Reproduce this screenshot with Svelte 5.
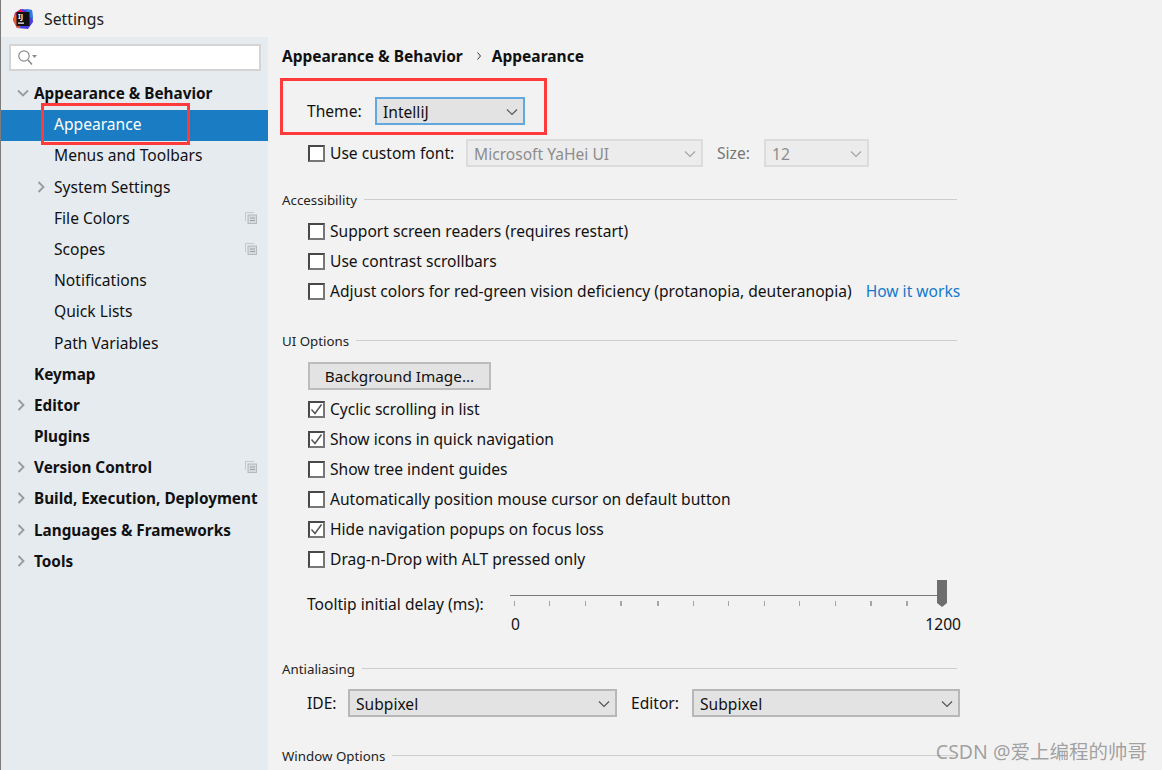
<script lang="ts">
	type TreeRow = { label: string; indent: number; bold?: boolean; arrow?: 'open' | 'closed'; selected?: boolean; copy?: boolean };

	const tree: TreeRow[] = [
		{ label: 'Appearance & Behavior', indent: 33, bold: true, arrow: 'open' },
		{ label: 'Appearance', indent: 53, selected: true },
		{ label: 'Menus and Toolbars', indent: 53 },
		{ label: 'System Settings', indent: 53, arrow: 'closed' },
		{ label: 'File Colors', indent: 53, copy: true },
		{ label: 'Scopes', indent: 53, copy: true },
		{ label: 'Notifications', indent: 53 },
		{ label: 'Quick Lists', indent: 53 },
		{ label: 'Path Variables', indent: 53 },
		{ label: 'Keymap', indent: 33, bold: true },
		{ label: 'Editor', indent: 33, bold: true, arrow: 'closed' },
		{ label: 'Plugins', indent: 33, bold: true },
		{ label: 'Version Control', indent: 33, bold: true, arrow: 'closed', copy: true },
		{ label: 'Build, Execution, Deployment', indent: 33, bold: true, arrow: 'closed' },
		{ label: 'Languages & Frameworks', indent: 33, bold: true, arrow: 'closed' },
		{ label: 'Tools', indent: 33, bold: true, arrow: 'closed' },
	];

	const accessibility = [
		{ label: 'Support screen readers (requires restart)', checked: false },
		{ label: 'Use contrast scrollbars', checked: false },
		{ label: 'Adjust colors for red-green vision deficiency (protanopia, deuteranopia)', checked: false, link: 'How it works' },
	];

	const uiOptions = [
		{ label: 'Cyclic scrolling in list', checked: true },
		{ label: 'Show icons in quick navigation', checked: true },
		{ label: 'Show tree indent guides', checked: false },
		{ label: 'Automatically position mouse cursor on default button', checked: false },
		{ label: 'Hide navigation popups on focus loss', checked: true },
		{ label: 'Drag-n-Drop with ALT pressed only', checked: false },
	];

	const ticks = Array.from({ length: 13 }, (_, i) => i);
</script>

{#snippet chevron()}
	<svg class="chev" width="12" height="8" viewBox="0 0 12 8"><path d="M1 1.5 6 6.5 11 1.5" fill="none" stroke="currentColor" stroke-width="1.2" /></svg>
{/snippet}

{#snippet check(checked: boolean)}
	<span class="box">
		{#if checked}
			<svg width="15" height="15" viewBox="0 0 15 15"><path d="M2.5 7.5 6 11.5 12.5 2.5" fill="none" stroke="#555" stroke-width="1.5" /></svg>
		{/if}
	</span>
{/snippet}

<div class="window">
	<header class="titlebar">
		<svg class="logo" width="22" height="22" viewBox="0 0 22 22">
			<path d="M3 5 9 1 20 2 21 14 16 21 5 20 1 12Z" fill="#4a3ee0" />
			<path d="M1 12 3 5 9 2 8 20 5 20Z" fill="#f0592a" />
			<path d="M3 5 9 1 12 5 5 9Z" fill="#e8175d" />
			<path d="M14 1 20 2 21 11 16 8Z" fill="#2a7fe0" />
			<rect x="4.5" y="4" width="13" height="14" fill="#111" />
			<text x="6" y="11" class="logo-text">IJ</text>
			<rect x="6" y="14.5" width="6" height="1.2" fill="#fff" />
		</svg>
		<span>Settings</span>
	</header>

	<div class="body">
		<aside class="sidebar">
			<div class="search">
				<svg width="22" height="18" viewBox="0 0 22 18">
					<circle cx="7" cy="7" r="5.2" fill="none" stroke="#8a8a8a" stroke-width="1.2" />
					<path d="M11 11 15 15.5" stroke="#8a8a8a" stroke-width="1.5" />
					<path d="M15 6h5l-2.5 3Z" fill="#8a8a8a" />
				</svg>
			</div>
			<nav class="tree">
				{#each tree as row}
					<div class="row" class:selected={row.selected} class:bold={row.bold} style="padding-left: {row.indent}px">
						{#if row.arrow === 'open'}
							<svg class="arrow" style="left: {row.indent - 17}px" width="12" height="12" viewBox="0 0 12 12"><path d="M1 3.5 6 8.5 11 3.5" fill="none" stroke="#9a9a9a" stroke-width="1.8" /></svg>
						{:else if row.arrow === 'closed'}
							<svg class="arrow" style="left: {row.indent - 19}px" width="12" height="12" viewBox="0 0 12 12"><path d="M3.5 1 8.5 6 3.5 11" fill="none" stroke="#9a9a9a" stroke-width="1.8" /></svg>
						{/if}
						<span>{row.label}</span>
						{#if row.copy}
							<svg class="copy" width="12" height="12" viewBox="0 0 12 12">
								<path d="M.5 9V.5H9" fill="none" stroke="#c3c8cc" />
								<rect x="3" y="3" width="8.5" height="8.5" fill="#d5dadd" stroke="#b4b9bd" />
								<path d="M5 6h5M5 8.5h5" stroke="#9ea3a7" />
							</svg>
						{/if}
					</div>
				{/each}
			</nav>
		</aside>

		<main class="content">
			<div class="crumbs">
				<b>Appearance &amp; Behavior</b>
				<svg class="crumb-sep" width="4" height="8" viewBox="0 0 4 8"><path d="M.5 .5 3.5 4 .5 7.5" fill="none" stroke="#333" stroke-width="1" /></svg>
				<b>Appearance</b>
			</div>

			<div class="theme-row">
				<span class="theme-label">Theme:</span>
				<div class="combo focused">IntelliJ {@render chevron()}</div>
			</div>

			<div class="font-row">
				<label class="check font-check">{@render check(false)}<span>Use custom font:</span></label>
				<div class="combo disabled font-combo">Microsoft YaHei UI {@render chevron()}</div>
				<span class="size-label">Size:</span>
				<div class="combo disabled size-combo">12 {@render chevron()}</div>
			</div>

			<h3 class="group first"><span>Accessibility</span></h3>
			<div class="checks">
				{#each accessibility as item}
					<div class="check">
						{@render check(item.checked)}<span>{item.label}</span>
						{#if item.link}<a href="#how">{item.link}</a>{/if}
					</div>
				{/each}
			</div>

			<h3 class="group ui"><span>UI Options</span></h3>
			<button class="bg-button">Background Image...</button>
			<div class="checks ui-checks">
				{#each uiOptions as item}
					<div class="check">{@render check(item.checked)}<span>{item.label}</span></div>
				{/each}
			</div>

			<div class="slider-row">
				<span class="slider-label">Tooltip initial delay (ms):</span>
				<div class="slider">
					<div class="track"></div>
					<div class="ticks">
						{#each ticks as t}<span class="tick" class:wide={t === 3 || t === 4 || t === 10 || t === 11}></span>{/each}
					</div>
					<svg class="thumb" width="10" height="27" viewBox="0 0 10 27"><path d="M0 0H10V23L5 27 0 23Z" fill="#6e6e6e" /></svg>
					<div class="slider-values"><span>0</span><span>1200</span></div>
				</div>
			</div>

			<h3 class="group aa"><span>Antialiasing</span></h3>
			<div class="aa-row">
				<span class="aa-ide">IDE:</span>
				<div class="combo aa-combo ide">Subpixel {@render chevron()}</div>
				<span class="aa-editor">Editor:</span>
				<div class="combo aa-combo editor">Subpixel {@render chevron()}</div>
			</div>

			<h3 class="group win"><span>Window Options</span></h3>
		</main>
	</div>

	<div class="mark mark-nav"></div>
	<div class="mark mark-theme"></div>
	<div class="watermark">CSDN @爱上编程的帅哥</div>
</div>

<style>
	:global(body) {
		margin: 0;
		background: #f2f2f2;
	}

	.window {
		position: relative;
		width: 1162px;
		height: 770px;
		overflow: hidden;
		background: #f2f2f2;
		color: #111;
		font-family: 'Noto Sans', 'Noto Sans CJK SC', sans-serif;
		font-size: 15.6px;
		border-left: 1px solid #7c7c7c;
		box-sizing: border-box;
	}

	.titlebar {
		height: 37px;
		display: flex;
		align-items: center;
		gap: 10px;
		padding-left: 11px;
		box-sizing: border-box;
		font-size: 15.8px;
		color: #222;
	}

	.logo-text {
		font-size: 7px;
		font-weight: 700;
		fill: #fff;
	}

	.body {
		display: flex;
		height: 733px;
	}

	.sidebar {
		width: 267px;
		flex: none;
		background: #e6ebf0;
		padding-top: 7px;
		box-sizing: border-box;
	}

	.search {
		margin-left: 8px;
		width: 252px;
		height: 27px;
		box-sizing: border-box;
		background: #fff;
		border: 2px solid #d4d4d4;
		display: flex;
		align-items: center;
		padding-left: 6px;
	}

	.tree {
		margin-top: 8px;
	}

	.row {
		position: relative;
		height: 31.2px;
		line-height: 29.5px;
		white-space: nowrap;
	}

	.row.bold {
		font-weight: 700;
		font-size: 15.3px;
	}

	.row.selected {
		background: #1a7dc4;
		color: #fff;
	}

	.arrow {
		position: absolute;
		top: 8px;
	}

	.copy {
		position: absolute;
		left: 244px;
		top: 8px;
	}

	.content {
		flex: 1;
		padding-left: 14px;
		min-width: 0;
	}

	.crumbs {
		height: 38px;
		display: flex;
		align-items: center;
		font-weight: 700;
		font-size: 15.5px;
	}

	.crumbs b {
		font-weight: 700;
		white-space: nowrap;
	}

	.crumb-sep {
		margin: 0 11px 0 14px;
		flex: none;
	}

	.theme-row {
		display: flex;
		align-items: center;
		margin: 22px 0 0 25px;
		height: 28px;
	}

	.theme-label {
		width: 68px;
		flex: none;
	}

	.combo {
		display: flex;
		align-items: center;
		justify-content: space-between;
		box-sizing: border-box;
		height: 28px;
		background: #e3e3e3;
		border: 2px solid #b8b8b8;
		padding: 1px 5px 0 6px;
		color: #111;
		flex: none;
	}

	.chev {
		color: #555;
	}

	.combo.focused {
		width: 150px;
		border-color: #62a8e0;
	}

	.combo.disabled {
		background: #ececec;
		border-color: #dcdcdc;
		color: #8c8c8c;
	}

	.combo.disabled .chev {
		color: #a5a5a5;
	}

	.font-row {
		display: flex;
		align-items: center;
		margin: 14px 0 0 26px;
		height: 28px;
	}

	.font-check {
		width: 158px;
		flex: none;
	}

	.font-combo {
		width: 237px;
	}

	.size-label {
		color: #777;
		margin-left: 14px;
		width: 47px;
		flex: none;
	}

	.size-combo {
		width: 105px;
	}

	.check {
		display: flex;
		align-items: center;
		gap: 5px;
		height: 30px;
		white-space: nowrap;
	}

	.box {
		width: 17px;
		height: 17px;
		box-sizing: border-box;
		border: 2px solid #484848;
		border-right-color: #777;
		border-bottom-color: #777;
		background: #fff;
		flex: none;
		position: relative;
	}

	.box svg {
		position: absolute;
		left: -1px;
		top: -1px;
	}

	.check a {
		color: #1279cc;
		text-decoration: none;
		margin-left: 9px;
	}

	.group {
		margin: 0;
		height: 20px;
		display: flex;
		align-items: center;
		gap: 7px;
		width: 675px;
		font-size: 13.3px;
		font-weight: 400;
		color: #222;
	}

	.group::after {
		content: '';
		flex: 1;
		border-top: 1px solid #cdcdcd;
		margin-top: -2px;
	}

	.group.first {
		margin-top: 23px;
	}

	.checks {
		margin: 6px 0 0 26px;
	}

	.group.ui {
		margin-top: 25px;
	}

	.bg-button {
		display: block;
		margin: 11px 0 0 26px;
		width: 183px;
		height: 28px;
		background: #e3e3e3;
		border: 2px solid #bcbcbc;
		font: inherit;
		font-size: 15.3px;
		color: #111;
		padding: 0 0 1px;
	}

	.ui-checks {
		margin-top: 4px;
	}

	.slider-row {
		display: flex;
		margin: 6px 0 0 25px;
		height: 60px;
	}

	.slider-label {
		margin-top: 14px;
		line-height: 20px;
		width: 203px;
		flex: none;
	}

	.slider {
		position: relative;
		width: 451px;
	}

	.track {
		position: absolute;
		left: 0;
		top: 15px;
		width: 432px;
		border-top: 1px solid #777;
	}

	.ticks {
		position: absolute;
		left: 4px;
		top: 21px;
		width: 430px;
		height: 5px;
		display: flex;
		justify-content: space-between;
	}

	.tick {
		width: 1px;
		background: #a5a5a5;
	}

	.tick.wide {
		width: 2px;
	}

	.thumb {
		position: absolute;
		left: 427px;
		top: 0;
	}

	.slider-values {
		position: absolute;
		left: 1px;
		right: 0;
		top: 34px;
		display: flex;
		justify-content: space-between;
		line-height: 20px;
	}

	.group.aa {
		margin-top: 19px;
	}

	.aa-row {
		display: flex;
		align-items: center;
		margin: 10px 0 0 25px;
		height: 28px;
	}

	.aa-combo.ide {
		width: 269px;
	}

	.aa-combo.editor {
		width: 268px;
	}

	.aa-ide {
		width: 41px;
		flex: none;
	}

	.aa-editor {
		margin-left: 14px;
		width: 61px;
		flex: none;
	}

	.group.win {
		margin-top: 29px;
	}

	.mark {
		position: absolute;
		border: 3px solid #ff3a3a;
		box-sizing: border-box;
		pointer-events: none;
	}

	.mark-nav {
		left: 40px;
		top: 103px;
		width: 149px;
		height: 42px;
	}

	.mark-theme {
		left: 279px;
		top: 78px;
		width: 267px;
		height: 57px;
	}

	.watermark {
		position: absolute;
		right: 15px;
		top: 736px;
		font-size: 19.5px;
		color: rgba(90, 90, 90, 0.55);
		white-space: nowrap;
	}
</style>
